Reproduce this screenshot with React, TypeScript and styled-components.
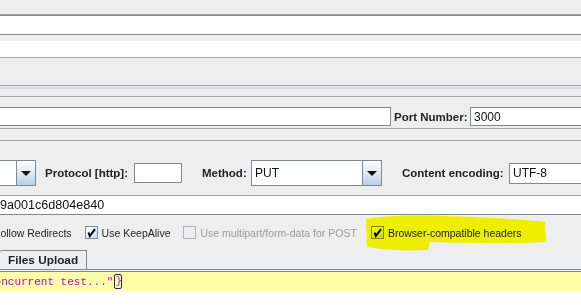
import React from 'react';
import styled, { createGlobalStyle } from 'styled-components';

const GlobalStyle = createGlobalStyle`
  * { box-sizing: border-box; }
  html, body {
    margin: 0;
    padding: 0;
    background: #eeeeee;
  }
`;

const FIELD_BORDER = '#7a8a99';
const RULE = '#a6a6a6';

const Frame = styled.div`
  width: 581px;
  height: 305px;
  overflow: hidden;
  display: flex;
  flex-direction: column;
  background: #eeeeee;
  font-family: "Liberation Sans", Arial, sans-serif;
  color: #1e1e1e;
  position: relative;
`;

// plain grey strip, optionally closed by a 1px rule
const Band = styled.div<{ $h: number; $rule?: boolean }>`
  flex-shrink: 0;
  height: ${p => p.$h}px;
  background: #eeeeee;
  border-bottom: ${p => (p.$rule ? `1px solid ${RULE}` : 'none')};
`;

const NameField = styled.div`
  flex-shrink: 0;
  height: 20px;
  background: #ffffff;
  border-top: 1px solid ${FIELD_BORDER};
  border-bottom: 1px solid ${FIELD_BORDER};
`;

const CommentArea = styled.div`
  flex-shrink: 0;
  height: 17px;
  background: #ffffff;
  border-bottom: 1px solid ${RULE};
`;

const FocusRule = styled.div`
  flex-shrink: 0;
  height: 4px;
  border-top: 1px solid #8ba4c6;
  border-bottom: 2px solid #cddcef;
  background: #eeeeee;
`;

const Row = styled.div<{ $h: number; $shift?: number }>`
  flex-shrink: 0;
  height: ${p => p.$h}px;
  display: flex;
  align-items: center;
  margin-left: ${p => p.$shift ?? 0}px;
  width: 700px;
`;

const TextField = styled.div<{ $w?: number; $h?: number }>`
  flex-shrink: 0;
  width: ${p => p.$w}px;
  height: ${p => p.$h ?? 19}px;
  background: #ffffff;
  border: 1px solid ${FIELD_BORDER};
  display: flex;
  align-items: center;
  padding-left: 3px;
  font-size: 12px;
  color: #111;
  white-space: nowrap;
  overflow: hidden;
`;

const Label = styled.div<{ $w: number; $pad?: number }>`
  flex-shrink: 0;
  width: ${p => p.$w}px;
  padding-left: ${p => p.$pad ?? 0}px;
  font-size: 11.5px;
  font-weight: bold;
  color: #232323;
  white-space: nowrap;
`;

const Spacer = styled.div<{ $w: number }>`
  flex-shrink: 0;
  width: ${p => p.$w}px;
`;

const Combo = styled.div<{ $w: number }>`
  flex-shrink: 0;
  width: ${p => p.$w}px;
  height: 26px;
  display: flex;
  border: 1px solid ${FIELD_BORDER};
  background: #ffffff;
`;

const ComboText = styled.div`
  flex: 1;
  display: flex;
  align-items: center;
  padding-left: 3px;
  font-size: 12px;
  color: #111;
`;

const ComboArrow = styled.div`
  width: 19px;
  border-left: 1px solid ${FIELD_BORDER};
  background: linear-gradient(to bottom, #ffffff 0%, #e3ecf6 45%, #b9cfe5 100%);
  display: flex;
  align-items: center;
  justify-content: center;
`;

const Triangle = styled.div`
  width: 0;
  height: 0;
  border-left: 5px solid transparent;
  border-right: 5px solid transparent;
  border-top: 5px solid #111;
`;

const IdField = styled.div`
  flex-shrink: 0;
  height: 20px;
  background: #ffffff;
  border-top: 1px solid ${RULE};
  border-bottom: 1px solid ${FIELD_BORDER};
  display: flex;
  align-items: center;
  font-size: 12.6px;
  color: #111;
  padding-left: 0;
  white-space: nowrap;
`;

const Option = styled.div<{ $gapAfter: number }>`
  flex-shrink: 0;
  display: flex;
  align-items: center;
  gap: 4px;
  margin-right: ${p => p.$gapAfter}px;
  font-size: 10.5px;
  white-space: nowrap;
`;

const OptionText = styled.span<{ $disabled?: boolean }>`
  color: ${p => (p.$disabled ? '#9b9b9b' : '#1e1e1e')};
`;

const Box = styled.div<{ $disabled?: boolean }>`
  width: 13px;
  height: 13px;
  border: 1px solid ${p => (p.$disabled ? '#a9b5c2' : FIELD_BORDER)};
  background: ${p =>
    p.$disabled ? '#eeeeee' : 'linear-gradient(135deg, #ffffff 0%, #e6eef7 50%, #c9daec 100%)'};
  display: flex;
  align-items: center;
  justify-content: center;
`;

const TabStrip = styled.div`
  flex-shrink: 0;
  height: 19px;
  display: flex;
  align-items: flex-end;
`;

const Tab = styled.div`
  height: 19px;
  margin-left: -4px;
  width: 91px;
  border: 1px solid ${FIELD_BORDER};
  border-bottom: none;
  border-top-left-radius: 7px;
  padding-left: 11px;
  display: flex;
  align-items: center;
  font-size: 11.8px;
  font-weight: bold;
  color: #232323;
`;

const TabBase = styled.div`
  flex-shrink: 0;
  height: 3px;
  border-top: 1px solid ${FIELD_BORDER};
  border-bottom: 1px solid ${FIELD_BORDER};
`;

const Editor = styled.div`
  flex-shrink: 0;
  height: 19px;
  background: #ffffaa;
  display: flex;
  align-items: center;
  font-family: "Liberation Mono", "DejaVu Sans Mono", monospace;
  font-size: 11px;
  color: #c800c8;
  white-space: pre;
`;

const CodeLine = styled.span`
  margin-left: -12px;
`;

const Bracket = styled.span`
  display: inline-block;
  width: 8px;
  height: 15px;
  margin-left: 1px;
  border: 1px solid #20207a;
  border-radius: 2px;
  line-height: 12px;
  color: #e0207a;
  text-align: center;
`;

const Filler = styled.div`
  flex: 1;
  background: #ffffff;
`;

const Highlight = styled.svg`
  position: absolute;
  left: 360px;
  top: 212px;
  mix-blend-mode: multiply;
  pointer-events: none;
`;

const Check = () => (
  <svg width="11" height="11" viewBox="0 0 11 11">
    <path d="M2.5 5.5 L3.8 9 L9 2.2" fill="none" stroke="#000" strokeWidth="2" strokeLinejoin="miter" />
  </svg>
);

const App: React.FC = () => {
  return (
    <>
      <GlobalStyle />
      <Frame>
        <Band $h={15} $rule />
        <NameField />
        <Band $h={6} />
        <CommentArea />
        <Band $h={27} />
        <FocusRule />
        <Band $h={8} $rule />
        <Band $h={10} />

        <Row $h={19} $shift={-4}>
          <TextField $w={395} />
          <Label $w={79} $pad={3}>Port Number:</Label>
          <TextField $w={160}>3000</TextField>
        </Row>

        <Band $h={3} $rule />
        <Band $h={12} $rule />
        <Band $h={19} />

        <Row $h={26} $shift={-40}>
          <Combo $w={76}>
            <ComboText />
            <ComboArrow><Triangle /></ComboArrow>
          </Combo>
          <Spacer $w={9} />
          <Label $w={89}>Protocol [http]:</Label>
          <TextField $w={48} $h={20} />
          <Spacer $w={20} />
          <Label $w={49}>Method:</Label>
          <Combo $w={131}>
            <ComboText>PUT</ComboText>
            <ComboArrow><Triangle /></ComboArrow>
          </Combo>
          <Spacer $w={20} />
          <Label $w={107}>Content encoding:</Label>
          <TextField $w={120} $h={21}>UTF-8</TextField>
        </Row>

        <Band $h={9} />
        <IdField>9a001c6d804e840</IdField>

        <Row $h={35} $shift={-6}>
          <Option $gapAfter={13}>
            <OptionText>Follow Redirects</OptionText>
          </Option>
          <Option $gapAfter={13}>
            <Box><Check /></Box>
            <OptionText>Use KeepAlive</OptionText>
          </Option>
          <Option $gapAfter={14}>
            <Box $disabled />
            <OptionText $disabled>Use multipart/form-data for POST</OptionText>
          </Option>
          <Option $gapAfter={0}>
            <Box><Check /></Box>
            <OptionText>Browser-compatible headers</OptionText>
          </Option>
        </Row>

        <TabStrip>
          <Tab>Files Upload</Tab>
        </TabStrip>
        <TabBase />
        <Editor>
          <CodeLine>concurrent test..."</CodeLine>
          <Bracket>{'}'}</Bracket>
        </Editor>
        <Filler />

        <Highlight width="190" height="40" viewBox="0 0 190 40">
          <path
            d="M6 7 C 25 3, 60 3, 85 4 C 120 5, 160 7, 185 10 L 186 30 C 150 32, 110 31, 70 30 L 68 38 C 45 39, 25 38, 7 35 Z"
            fill="#ffff00"
          />
        </Highlight>
      </Frame>
    </>
  );
};

export default App;
